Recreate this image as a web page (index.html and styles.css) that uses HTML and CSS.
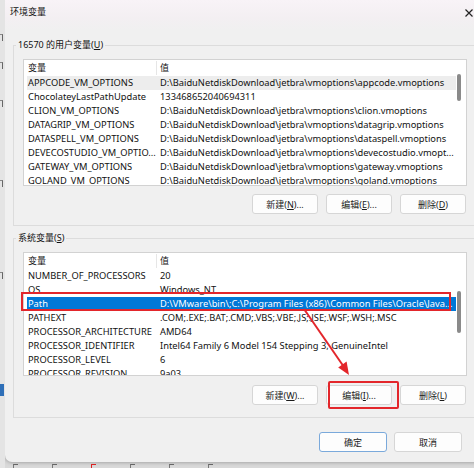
FILE: index.html
```html
<!DOCTYPE html>
<html lang="zh-CN">
<head>
    <meta charset="UTF-8">
    <meta name="viewport" content="width=device-width, initial-scale=1.0">
    <title>环境变量</title>
    <link rel="stylesheet" href="styles.css">
</head>
<body>
    <div class="screen">
        <div class="left-strip">
            <span class="peek p1"></span>
            <span class="peek p2"></span>
            <span class="peek p3"></span>
            <span class="peek p4"></span>
            <span class="peek p5"></span>
            <span class="peek-blue"></span>
        </div>
        <div class="main">
            <div class="dialog">
                <div class="titlebar">
                    <span class="title">环境变量</span>
                    <svg class="close" width="8" height="8" viewBox="0 0 8 8">
                        <path d="M0.5 0.5 L7.5 7.5 M7.5 0.5 L0.5 7.5" stroke="#222" stroke-width="1.2" fill="none"/>
                    </svg>
                </div>

                <fieldset class="group">
                    <legend>16570 的用户变量(<u>U</u>)</legend>
                    <div class="list user-list">
                        <div class="list-head">
                            <span class="col-name">变量</span>
                            <span class="col-value">值</span>
                        </div>
                        <div class="row hover">
                            <span class="col-name">APPCODE_VM_OPTIONS</span>
                            <span class="col-value">D:\BaiduNetdiskDownload\jetbra\vmoptions\appcode.vmoptions</span>
                        </div>
                        <div class="row">
                            <span class="col-name">ChocolateyLastPathUpdate</span>
                            <span class="col-value">133468652040694311</span>
                        </div>
                        <div class="row">
                            <span class="col-name">CLION_VM_OPTIONS</span>
                            <span class="col-value">D:\BaiduNetdiskDownload\jetbra\vmoptions\clion.vmoptions</span>
                        </div>
                        <div class="row">
                            <span class="col-name">DATAGRIP_VM_OPTIONS</span>
                            <span class="col-value">D:\BaiduNetdiskDownload\jetbra\vmoptions\datagrip.vmoptions</span>
                        </div>
                        <div class="row">
                            <span class="col-name">DATASPELL_VM_OPTIONS</span>
                            <span class="col-value">D:\BaiduNetdiskDownload\jetbra\vmoptions\dataspell.vmoptions</span>
                        </div>
                        <div class="row">
                            <span class="col-name">DEVECOSTUDIO_VM_OPTIO...</span>
                            <span class="col-value">D:\BaiduNetdiskDownload\jetbra\vmoptions\devecostudio.vmopt...</span>
                        </div>
                        <div class="row">
                            <span class="col-name">GATEWAY_VM_OPTIONS</span>
                            <span class="col-value">D:\BaiduNetdiskDownload\jetbra\vmoptions\gateway.vmoptions</span>
                        </div>
                        <div class="row">
                            <span class="col-name">GOLAND_VM_OPTIONS</span>
                            <span class="col-value">D:\BaiduNetdiskDownload\jetbra\vmoptions\goland.vmoptions</span>
                        </div>
                        <div class="scroll-thumb thumb-user"></div>
                    </div>
                    <div class="actions">
                        <button class="btn">新建(<u>N</u>)...</button>
                        <button class="btn">编辑(<u>E</u>)...</button>
                        <button class="btn">删除(<u>D</u>)</button>
                    </div>
                </fieldset>

                <fieldset class="group system">
                    <legend>系统变量(<u>S</u>)</legend>
                    <div class="list system-list">
                        <div class="list-head">
                            <span class="col-name">变量</span>
                            <span class="col-value">值</span>
                        </div>
                        <div class="row">
                            <span class="col-name">NUMBER_OF_PROCESSORS</span>
                            <span class="col-value">20</span>
                        </div>
                        <div class="row">
                            <span class="col-name">OS</span>
                            <span class="col-value">Windows_NT</span>
                        </div>
                        <div class="row selected">
                            <span class="col-name">Path</span>
                            <span class="col-value">D:\VMware\bin\;C:\Program Files (x86)\Common Files\Oracle\Java...</span>
                        </div>
                        <div class="row">
                            <span class="col-name">PATHEXT</span>
                            <span class="col-value">.COM;.EXE;.BAT;.CMD;.VBS;.VBE;.JS;.JSE;.WSF;.WSH;.MSC</span>
                        </div>
                        <div class="row">
                            <span class="col-name">PROCESSOR_ARCHITECTURE</span>
                            <span class="col-value">AMD64</span>
                        </div>
                        <div class="row">
                            <span class="col-name">PROCESSOR_IDENTIFIER</span>
                            <span class="col-value">Intel64 Family 6 Model 154 Stepping 3, GenuineIntel</span>
                        </div>
                        <div class="row">
                            <span class="col-name">PROCESSOR_LEVEL</span>
                            <span class="col-value">6</span>
                        </div>
                        <div class="row">
                            <span class="col-name">PROCESSOR_REVISION</span>
                            <span class="col-value">9a03</span>
                        </div>
                        <div class="scroll-thumb thumb-system"></div>
                    </div>
                    <div class="actions">
                        <button class="btn">新建(<u>W</u>)...</button>
                        <button class="btn">编辑(<u>I</u>)...</button>
                        <button class="btn">删除(<u>L</u>)</button>
                    </div>
                </fieldset>

                <div class="footer">
                    <button class="btn primary">确定</button>
                    <button class="btn">取消</button>
                </div>
            </div>
            <div class="bottom-strip">
                <span class="bit"></span>
                <span class="bit"></span>
                <span class="bit red"></span>
                <span class="bit"></span>
                <span class="bit"></span>
                <span class="bit"></span>
            </div>
        </div>

        <!-- annotations drawn on top of the screenshot -->
        <div class="mark mark-path"></div>
        <div class="mark mark-edit"></div>
        <svg class="arrow" width="474" height="468" viewBox="0 0 474 468">
            <line x1="304" y1="309" x2="344" y2="367" stroke="#e3262b" stroke-width="2"/>
            <polygon points="349,375 346.6,361.6 338.2,367.4" fill="#e3262b"/>
        </svg>
    </div>
</body>
</html>
```

FILE: styles.css
```css
* {
    box-sizing: border-box;
}
body {
    margin: 0;
    width: 474px;
    height: 468px;
    overflow: hidden;
    background: #d9d9d9;
    font-family: "Noto Sans", "Noto Sans CJK SC", sans-serif;
    font-size: 9.3px;
    color: #111;
}
.screen {
    position: relative;
    display: flex;
    width: 474px;
    height: 468px;
}
.left-strip {
    position: relative;
    width: 5px;
    flex: none;
    background: #e4e4e4;
    overflow: hidden;
}
.peek {
    position: absolute;
    left: 0;
    width: 3px;
    height: 7px;
    border-right: 1px solid #666;
    border-top: 1px solid #888;
}
.p1 { top: 34px; }
.p2 { top: 62px; }
.p3 { top: 100px; }
.p4 { top: 180px; }
.p5 { top: 272px; }
.peek-blue {
    position: absolute;
    left: 0;
    top: 384px;
    width: 4px;
    height: 12px;
    background: #2f6fb8;
}
.main {
    flex: none;
    width: 482px;
    display: flex;
    flex-direction: column;
}
.dialog {
    height: 462px;
    background: #f0f0f0;
    border-radius: 0 0 0 7px;
    box-shadow: 0 0 4px rgba(0, 0, 0, 0.35);
    display: flex;
    flex-direction: column;
}
.titlebar {
    height: 30px;
    display: flex;
    justify-content: space-between;
    align-items: flex-start;
    padding: 5px 14px 0 5px;
    background: linear-gradient(#f8f3f7, #f3eff2 60%, #f0f0f0);
    line-height: 14px;
    font-size: 9px;
}
.close {
    margin-top: 4px;
    flex: none;
}
.group {
    margin: 8px 0 0 8px;
    padding: 7px 9px 11px 9px;
    width: 464px;
    min-width: 0;
    border: 1px solid #dcdcdc;
}
.group.system {
    margin-top: 5px;
    padding-bottom: 12px;
}
.group legend {
    margin-left: -7px;
    padding: 0 2px;
    line-height: 14px;
    font-size: 9px;
}
.list {
    position: relative;
    height: 127px;
    background: #fff;
    border: 1px solid #d2d2d2;
    padding: 0 10px 0 3px;
    overflow: hidden;
}
.system-list {
    height: 124px;
}
.list-head {
    display: flex;
    height: 16px;
    align-items: center;
    font-size: 9px;
}
.list-head .col-name {
    border-right: 1px solid #e6e6e6;
}
.row {
    display: flex;
    height: 14px;
    align-items: center;
    white-space: nowrap;
}
.col-name {
    width: 130px;
    flex: none;
    padding-left: 1px;
    overflow: hidden;
    line-height: 14px;
}
.col-value {
    flex: 1;
    padding-left: 3px;
    overflow: hidden;
    line-height: 14px;
}
.row.hover {
    background: #ededed;
}
.row.selected {
    background: #0078d7;
    color: #fff;
}
.scroll-thumb {
    position: absolute;
    right: 5px;
    width: 4px;
    border-radius: 2px;
    background: #8a8a8a;
}
.thumb-user {
    top: 14px;
    height: 27px;
}
.thumb-system {
    top: 38px;
    height: 42px;
}
.actions {
    display: flex;
    justify-content: flex-end;
    gap: 8px;
    margin-top: 8px;
    padding-right: 1px;
}
.system .actions {
    margin-top: 9px;
}
.btn {
    width: 66px;
    height: 20px;
    padding: 0;
    font-family: inherit;
    font-size: 9px;
    color: #1b1b1b;
    background: #fdfdfd;
    border: 1px solid #d6d6d6;
    border-radius: 3px;
}
.footer {
    display: flex;
    justify-content: flex-end;
    gap: 7px;
    margin-top: 14px;
    padding-right: 25px;
}
.footer .btn {
    width: 68px;
}
.btn.primary {
    border-color: #7aa9db;
}
.bottom-strip {
    height: 6px;
    display: flex;
    gap: 34px;
    align-items: flex-end;
    padding-left: 8px;
}
.bit {
    width: 5px;
    height: 4px;
    border-top: 1px solid #666;
    border-left: 1px solid #777;
}
.bit.red {
    border-color: #d22;
}
.mark {
    position: absolute;
    border: 2px solid #e3262b;
}
.mark-path {
    left: 21px;
    top: 292px;
    width: 430px;
    height: 19px;
}
.mark-edit {
    left: 328px;
    top: 381px;
    width: 71px;
    height: 28px;
    border-radius: 2px;
}
.arrow {
    position: absolute;
    left: 0;
    top: 0;
    pointer-events: none;
}
```
